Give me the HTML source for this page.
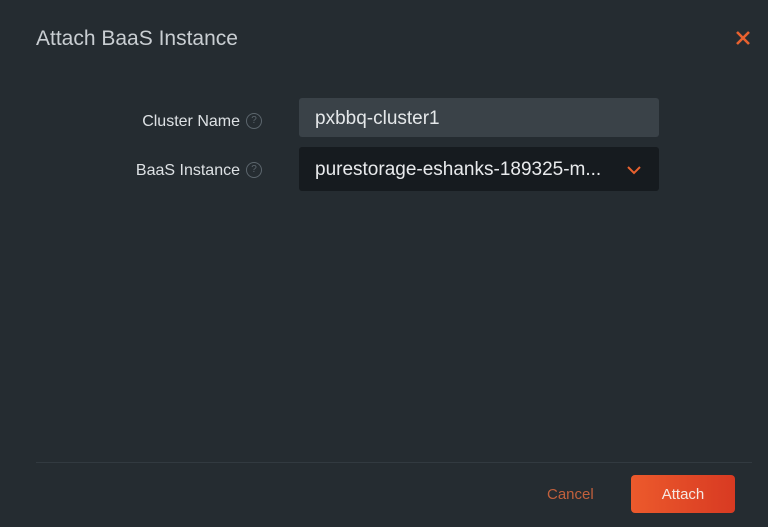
<!DOCTYPE html>
<html><head><style>
body{margin:0;width:768px;height:527px;background:#252c31;font-family:"Liberation Sans",sans-serif;position:relative;overflow:hidden;color:#e6e8ea}
.t{position:absolute;left:36px;top:27px;font-size:21px;color:#c9ced2}
.x{position:absolute;left:735px;top:30px}
.lbl{position:absolute;font-size:16px;color:#dde1e4;text-align:right;width:240px;left:0}
.q{position:absolute;width:14px;height:14px;border:1px solid #5c666d;border-radius:50%;font-size:10px;color:#5c666d;text-align:center;line-height:14px}
.in{position:absolute;left:299px;width:360px;height:39px;border-radius:3px;font-size:19px;line-height:41px;padding-left:16px;box-sizing:border-box}
.line{position:absolute;left:36px;top:462px;width:716px;height:1px;background:#323a40}
.btn{position:absolute;left:631px;top:475px;width:104px;height:38px;border-radius:4px;background:linear-gradient(90deg,#ec5a2c,#d83a22);color:#f5e8e2;font-size:15px;text-align:center;line-height:40px}
.c{position:absolute;left:547px;top:486px;font-size:15px;color:#c2603c}
</style></head><body>
<div class="t">Attach BaaS Instance</div>
<svg class="x" width="16" height="16" viewBox="0 0 16 16"><path d="M2 2L14 14M14 2L2 14" stroke="#e8622f" stroke-width="2.6"/></svg>
<div class="lbl" style="top:113px">Cluster Name</div><div class="q" style="left:246px;top:113px">?</div>
<div class="lbl" style="top:162px">BaaS Instance</div><div class="q" style="left:246px;top:162px">?</div>
<div class="in" style="top:98px;background:#3a4248;color:#e4e7e9">pxbbq-cluster1</div>
<div class="in" style="top:147px;background:#161b1f;color:#e8eaec;height:44px;line-height:46px">purestorage-eshanks-189325-m...</div>
<svg style="position:absolute;left:626px;top:165px" width="16" height="10" viewBox="0 0 16 10"><path d="M2 2L8 8L14 2" stroke="#e8622f" stroke-width="2" fill="none"/></svg>
<div class="line"></div>
<div class="c">Cancel</div>
<div class="btn">Attach</div>
</body></html>
